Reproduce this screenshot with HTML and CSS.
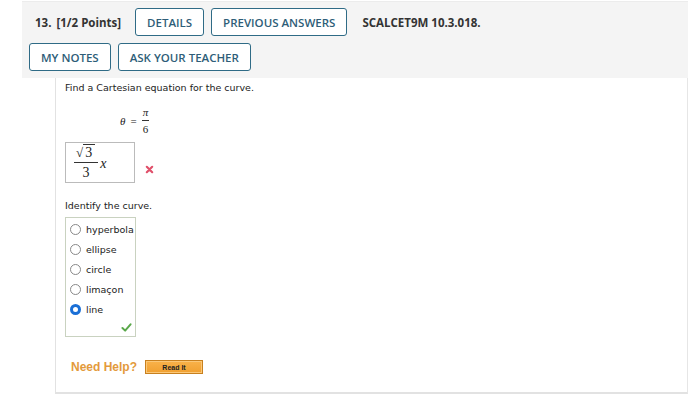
FILE: index.html
```html
<!DOCTYPE html>
<html lang="en">
<head>
    <meta charset="UTF-8">
    <title>Question 13</title>
    <link rel="stylesheet" href="styles.css">
</head>
<body>
    <div class="question">
        <div class="header">
            <div class="header-row first">
                <span class="qnum">13.</span>
                <span class="points">[1/2 Points]</span>
                <button class="btn">DETAILS</button>
                <button class="btn">PREVIOUS ANSWERS</button>
                <span class="code">SCALCET9M 10.3.018.</span>
            </div>
            <div class="header-row">
                <button class="btn">MY NOTES</button>
                <button class="btn">ASK YOUR TEACHER</button>
            </div>
        </div>

        <div class="body">
            <p class="prompt">Find a Cartesian equation for the curve.</p>

            <div class="given">
                <span class="var">θ</span>
                <span class="eq">=</span>
                <span class="frac">
                    <span class="num var">π</span>
                    <span class="den">6</span>
                </span>
            </div>

            <div class="answer-row">
                <div class="answer-box">
                    <span class="frac big">
                        <span class="num"><span class="radical">√</span><span class="radicand">3</span></span>
                        <span class="den">3</span>
                    </span>
                    <span class="var x">x</span>
                </div>
                <svg class="mark-wrong" viewBox="0 0 10 10">
                    <path d="M2 2 L8 8 M8 2 L2 8" stroke="#e0506a" stroke-width="2.4" stroke-linecap="round"/>
                </svg>
            </div>

            <p class="prompt second">Identify the curve.</p>

            <div class="choices">
                <label class="choice"><span class="radio"></span>hyperbola</label>
                <label class="choice"><span class="radio"></span>ellipse</label>
                <label class="choice"><span class="radio"></span>circle</label>
                <label class="choice"><span class="radio"></span>limaçon</label>
                <label class="choice"><span class="radio checked"></span>line</label>
                <div class="choices-foot">
                    <svg class="mark-right" viewBox="0 0 12 10">
                        <path d="M1.5 5.5 L4.5 8.5 L10.5 1.5" fill="none" stroke="#5aa84a" stroke-width="2.2" stroke-linecap="round" stroke-linejoin="round"/>
                    </svg>
                </div>
            </div>

            <div class="help">
                <span class="help-label">Need Help?</span>
                <button class="read-it">Read It</button>
            </div>
        </div>
    </div>
</body>
</html>
```

FILE: styles.css
```css
body {
    margin: 0;
    background-color: #fff;
    font-family: "Open Sans", "DejaVu Sans", sans-serif;
}
.question {
    width: 666px;
    margin-left: 22px;
}
.header {
    background-color: #f4f4f4;
    border-top: 1px solid #ececec;
    margin-top: 1px;
    padding: 6px 7px 7px 7px;
    display: flex;
    flex-direction: column;
    gap: 7px;
}
.header-row {
    display: flex;
    align-items: center;
    gap: 7px;
}
.header-row.first {
    padding-left: 6px;
}
.qnum,
.points,
.code {
    font-size: 11.5px;
    font-weight: 700;
    color: #333;
}
.points {
    margin-left: -2px;
    margin-right: 7px;
}
.code {
    margin-left: 8px;
}
.btn {
    height: 28px;
    padding: 0 11px;
    background-color: #fff;
    border: 1.5px solid #2f6b86;
    border-radius: 3px;
    font-family: "Open Sans", sans-serif;
    font-size: 11.5px;
    font-weight: 600;
    color: #2e5d78;
}
.body {
    margin-left: 33px;
    border-left: 1px solid #e2e2e2;
    border-right: 1px solid #e6e6e6;
    border-bottom: 2px solid #e2e2e2;
    padding: 4px 9px 18px 9px;
    font-family: "DejaVu Sans", Verdana, sans-serif;
    font-size: 9.5px;
    color: #222;
}
.prompt {
    margin: 0;
}
.prompt.second {
    margin-top: 17px;
}
.given {
    display: flex;
    align-items: center;
    gap: 5px;
    margin: 13px 0 7px 55px;
    font-family: "Liberation Serif", serif;
    font-size: 11px;
}
.var {
    font-family: "Liberation Serif", serif;
    font-style: italic;
}
.frac {
    display: inline-flex;
    flex-direction: column;
    align-items: center;
    font-family: "Liberation Serif", serif;
}
.frac .num {
    border-bottom: 1px solid #333;
    padding: 0 1px 2px 1px;
}
.frac .den {
    padding-top: 2px;
}
.answer-row {
    display: flex;
    align-items: center;
    gap: 10px;
}
.answer-box {
    width: 60px;
    height: 39px;
    border: 1px solid #bbb;
    display: flex;
    align-items: center;
    padding-left: 8px;
    font-family: "Liberation Serif", serif;
    font-size: 14px;
}
.frac.big .num {
    padding: 0 3px 1px 2px;
}
.frac.big .den {
    padding-top: 2px;
}
.radical {
    font-size: 13px;
}
.radicand {
    border-top: 1px solid #333;
    padding: 0 3px 0 2px;
}
.x {
    margin-left: 2px;
    margin-top: 2px;
    font-size: 14px;
}
.mark-wrong {
    width: 9px;
    height: 9px;
    margin-top: 14px;
}
.choices {
    width: 67px;
    margin-top: 6px;
    border: 1px solid #c9d2c0;
    padding: 5px 0 4px 2px;
    display: flex;
    flex-direction: column;
    gap: 7px;
}
.choice {
    display: flex;
    align-items: center;
    gap: 5px;
    line-height: 13px;
    padding-left: 2px;
}
.radio {
    width: 9px;
    height: 9px;
    border: 1px solid #888;
    border-radius: 50%;
    background-color: #fff;
}
.radio.checked {
    width: 5px;
    height: 5px;
    border: 3px solid #1a6fd6;
}
.choices-foot {
    display: flex;
    justify-content: flex-end;
    padding-right: 3px;
}
.mark-right {
    width: 11px;
    height: 9px;
}
.help {
    display: flex;
    align-items: center;
    gap: 8px;
    margin-top: 23px;
    padding-left: 6px;
}
.help-label {
    font-family: "Liberation Sans", Arial, sans-serif;
    font-size: 12px;
    font-weight: 700;
    color: #e39a3c;
}
.read-it {
    width: 58px;
    height: 14px;
    padding: 0;
    background: linear-gradient(#f9b24a, #f0a030);
    border: 1px solid #c8801e;
    box-shadow: inset 0 0 0 1px #fbc777;
    font-family: "Liberation Sans", Arial, sans-serif;
    font-size: 7px;
    font-weight: 700;
    color: #222;
}
```
